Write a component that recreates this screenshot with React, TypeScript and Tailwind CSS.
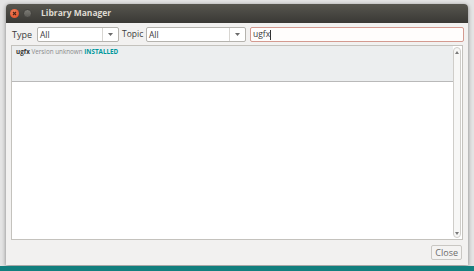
const Select = ({ width }: { width: string }) => (
  <div className={`${width} h-[15px] flex bg-white border border-[#b5b3ae] rounded-[2px]`}>
    <span className="flex-1 pl-[2px] text-[8.5px] leading-[13px] text-[#3c3c3c]">All</span>
    <span className="w-[16px] border-l border-[#d8d6d2] flex items-center justify-center">
      <svg width="5" height="3" viewBox="0 0 5 3">
        <path d="M0 0 L5 0 L2.5 3 Z" fill="#6b6b6b" />
      </svg>
    </span>
  </div>
);

const ScrollArrow = ({ up }: { up?: boolean }) => (
  <div className="h-[8px] flex items-center justify-center">
    <svg width="4" height="3" viewBox="0 0 4 3">
      <path d={up ? "M0 3 L4 3 L2 0 Z" : "M0 0 L4 0 L2 3 Z"} fill="#7a7a7a" />
    </svg>
  </div>
);

export default function App() {
  return (
    <div
      className="w-[474px] h-[271px] overflow-hidden flex flex-col bg-[#e4e4e4]"
      style={{ fontFamily: '"Open Sans", "DejaVu Sans", sans-serif' }}
    >
      <div className="flex-1 pt-[4px] pl-[6px]">
        <div className="w-[462px] h-[261px] flex flex-col bg-[#f2f1f0] rounded-t-[4px] shadow-[0_1px_4px_rgba(0,0,0,0.45)]">
          {/* title bar */}
          <div className="h-[19px] flex items-center gap-[3px] pl-[4px] rounded-t-[4px] bg-gradient-to-b from-[#57564f] to-[#3a3935]">
            <div className="w-[9px] h-[9px] rounded-full bg-[radial-gradient(circle_at_40%_35%,#f4805a,#d8451f)] flex items-center justify-center">
              <svg width="5" height="5" viewBox="0 0 5 5">
                <path d="M1 1 L4 4 M4 1 L1 4" stroke="#4a2418" strokeWidth="1.1" />
              </svg>
            </div>
            <div className="w-[9px] h-[9px] ml-[1px] rounded-full bg-gradient-to-b from-[#7d7c76] to-[#5b5a55] border border-[#44433f]" />
            <span className="ml-[6px] text-[8.5px] font-bold text-[#dfdbd2]">Library Manager</span>
          </div>

          {/* filter bar */}
          <div className="flex items-center pt-[4px] pl-[6px] h-[19px] text-[9px] text-[#3c3c3c]">
            <span className="w-[25px]">Type</span>
            <Select width="w-[82px]" />
            <span className="ml-[3px] w-[24px] text-[8.5px]">Topic</span>
            <Select width="w-[100px]" />
            <div className="ml-[4px] w-[214px] h-[15px] bg-[#fffdfc] border border-[#d49a90] rounded-[2px] flex items-center pl-[2px] text-[8.5px] text-[#3c3c3c]">
              ugfx<span className="w-px h-[10px] bg-[#333]" />
            </div>
          </div>

          {/* list */}
          <div className="mt-[3px] ml-[5px] w-[452px] h-[195px] flex bg-white border border-[#c4c2bd]">
            <div className="flex-1 flex flex-col">
              <div className="h-[36px] bg-[#eceeef] border-b border-[#b9b9b9] pl-[4px] pt-[2px] text-[6.3px] leading-[8px]">
                <span className="font-bold text-[#333]">ugfx</span>{" "}
                <span className="text-[#8a8a8a]">Version unknown</span>{" "}
                <span className="font-bold text-[#00979c]">INSTALLED</span>
              </div>
            </div>
            <div className="w-[8px] my-[1px] mr-[1px] flex flex-col border border-[#cfcdc9] rounded-[4px] bg-[#f7f7f6]">
              <ScrollArrow up />
              <div className="flex-1" />
              <ScrollArrow />
            </div>
          </div>

          {/* footer */}
          <div className="flex justify-end pr-[6px] pt-[5px]">
            <button className="h-[15px] px-[3px] text-[9px] leading-[13px] text-[#6b6b6b] bg-[#f4f3f2] border border-[#c9c7c3] rounded-[2px]">
              Close
            </button>
          </div>
        </div>
      </div>
      <div className="h-[5px] bg-[#127f7e]" />
    </div>
  );
}
